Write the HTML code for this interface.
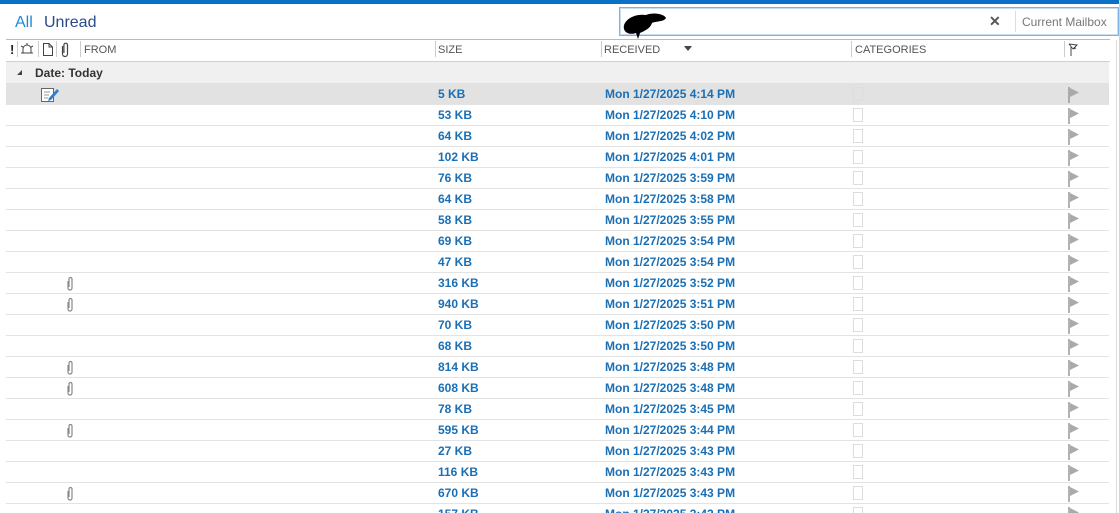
<!DOCTYPE html>
<html><head><style>
*{margin:0;padding:0;box-sizing:border-box}
html,body{width:1119px;height:513px;overflow:hidden}
body{background:#fff;font-family:"Liberation Sans",sans-serif;position:relative}
.a{position:absolute}
.hd{font-size:11px;color:#555;top:44px}
.sep{position:absolute;top:41px;width:1px;height:16px;background:#ccc}
.row{position:absolute;left:6px;width:1103px;height:21px;border-bottom:1px solid #e3e3e3}
.sz{position:absolute;left:432px;top:3px;font-size:12px;font-weight:bold;color:#1a6fb5}
.dt{position:absolute;left:599px;top:3px;font-size:12px;font-weight:bold;color:#1a6fb5}
.cb{position:absolute;left:847px;top:3px;width:10px;height:14px;border:1px solid #ddd}
.fl{position:absolute;left:1061px;top:2px}
.cl{position:absolute;left:60px;top:3px}
</style></head><body>
<div class="a" style="left:0;top:0;width:1119px;height:4px;background:#0a72c6"></div>
<div class="a" style="left:15px;top:14px;font-size:16px;color:#1e8ad6">All</div>
<div class="a" style="left:44px;top:14px;font-size:16px;color:#2a4a8a">Unread</div>
<div class="a" style="left:619px;top:7px;width:500px;height:29px;border:1px solid #7fb2e0;background:#fff"></div>
<div class="a" style="left:620px;top:8px;width:498px;height:27px;border:1px solid #c8ddf0"></div>
<div class="a" style="left:620px;top:9px;width:48px;height:24px"><svg width="50" height="32"><path d="M4 20 C2 12 14 4 26 6 C34 3 44 5 46 9 C44 13 36 12 32 14 C30 20 24 22 20 24 L18 30 L16 24 C10 26 5 24 4 20Z" fill="#000"/></svg></div>
<div class="a" style="left:989px;top:13px;font-size:14px;color:#555;font-weight:bold">✕</div>
<div class="a" style="left:1015px;top:11px;width:1px;height:21px;background:#ddd"></div>
<div class="a" style="left:1022px;top:15px;font-size:12px;color:#777">Current Mailbox</div>
<div class="a" style="left:6px;top:39px;width:1104px;height:1px;background:#bbb"></div>
<div class="a" style="left:6px;top:61px;width:1104px;height:1px;background:#d0d0d0"></div>
<div class="a hd" style="left:10px;top:42px;font-weight:bold;color:#222;font-size:13px">!</div>
<div class="sep" style="left:17px"></div>
<svg class="a" style="left:20px;top:42px" width="14" height="14"><path d="M3 11 L3 7 a4 4 0 0 1 8 0 L11 11 M1 11 H13 M7 1 V3 M1 4 L3 5 M13 4 L11 5" fill="none" stroke="#444"/></svg>
<div class="sep" style="left:38px"></div>
<svg class="a" style="left:42px;top:42px" width="12" height="15"><path d="M1.5 1.5 H7 L10.5 5 V13.5 H1.5Z M7 1.5 V5 H10.5" fill="none" stroke="#444"/></svg>
<div class="sep" style="left:56px"></div>
<svg class="a" style="left:60px;top:42px" width="10" height="16"><path d="M2.5 4 V12 a2.5 2.5 0 0 0 5 0 V3 a1.8 1.8 0 0 0 -3.6 0 V11" fill="none" stroke="#444" stroke-width="1.2"/></svg>
<div class="sep" style="left:80px"></div>
<div class="a hd" style="left:84px">FROM</div>
<div class="sep" style="left:435px"></div>
<div class="a hd" style="left:438px">SIZE</div>
<div class="sep" style="left:601px"></div>
<div class="a hd" style="left:604px">RECEIVED</div>
<div class="a" style="left:684px;top:46px;width:0;height:0;border-left:4px solid transparent;border-right:4px solid transparent;border-top:5px solid #444"></div>
<div class="sep" style="left:851px"></div>
<div class="a hd" style="left:855px">CATEGORIES</div>
<div class="sep" style="left:1064px"></div>
<svg class="a" style="left:1067px;top:43px" width="12" height="14"><path d="M2 1 L10 2 L6 6 L9 5 M2 1 L6 6 M4 4 L4 13" fill="none" stroke="#444"/></svg>
<div class="a" style="left:6px;top:62px;width:1103px;height:22px;background:#f0f0f0;border-bottom:1px solid #e0e0e0"></div>
<div class="a" style="left:17px;top:70px;width:0;height:0;border-left:5px solid transparent;border-bottom:5px solid #444"></div>
<div class="a" style="left:35px;top:66px;font-size:12px;font-weight:bold;color:#333">Date: Today</div>
<div class="a" style="left:1116px;top:40px;width:1px;height:473px;background:#ddd"></div>
<div id="rows"></div>
<script>
var d=[["5 KB","4:14",0],["53 KB","4:10",0],["64 KB","4:02",0],["102 KB","4:01",0],["76 KB","3:59",0],["64 KB","3:58",0],["58 KB","3:55",0],["69 KB","3:54",0],["47 KB","3:54",0],["316 KB","3:52",1],["940 KB","3:51",1],["70 KB","3:50",0],["68 KB","3:50",0],["814 KB","3:48",1],["608 KB","3:48",1],["78 KB","3:45",0],["595 KB","3:44",1],["27 KB","3:43",0],["116 KB","3:43",0],["670 KB","3:43",1],["157 KB","3:42",0]];
var h="";
d.forEach(function(r,i){
var y=84+i*21;
h+='<div class="row" style="top:'+y+'px;'+(i==0?'background:#e2e2e2':'')+'">';
if(i==0)h+='<svg class="a" style="left:34px;top:2px" width="20" height="17"><rect x="1.5" y="2.5" width="12" height="13" fill="#fff" stroke="#666"/><path d="M4 6h6M4 9h5M4 12h4" stroke="#999"/><path d="M9 12 L17 3 L19 5 L11 14 L8 15Z" fill="#2d7fd0"/></svg>';
if(r[2])h+='<svg class="cl" width="8" height="16"><path d="M2 5 V12 a2 2 0 0 0 4 0 V3 a1.5 1.5 0 0 0 -3 0 V11" fill="none" stroke="#888" stroke-width="1.2"/></svg>';
h+='<div class="sz">'+r[0]+'</div><div class="dt">Mon 1/27/2025 '+r[1]+' PM</div><div class="cb"></div>';
h+='<svg class="fl" width="14" height="17"><path d="M2 1V17" stroke="#999" stroke-width="1.5"/><path d="M3 2 L12 6.5 L3 11Z" fill="#aaa"/></svg></div>';
});
document.getElementById("rows").innerHTML=h;
</script>
</body></html>
